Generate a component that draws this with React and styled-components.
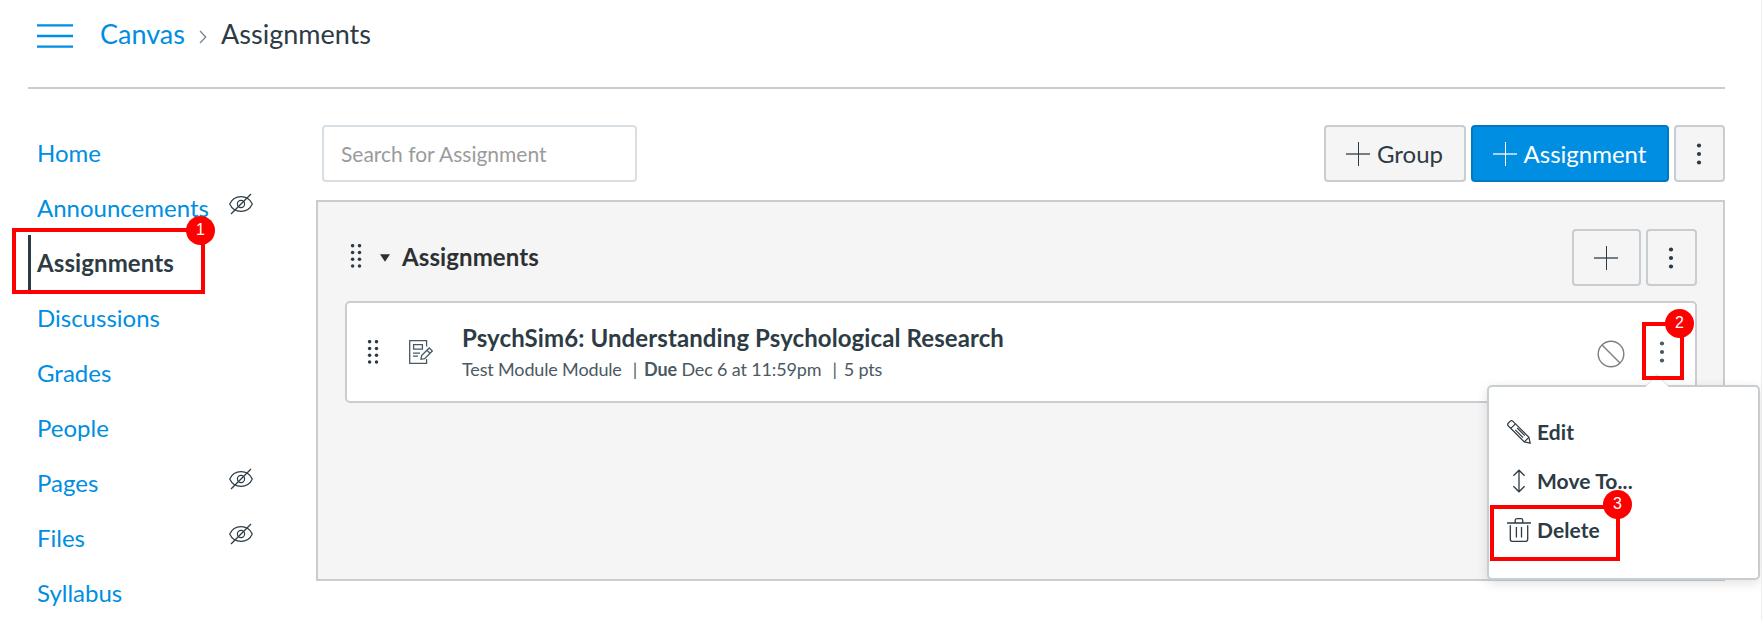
import React from "react";
import styled, { createGlobalStyle } from "styled-components";

const GlobalStyle = createGlobalStyle`
  * {
    box-sizing: border-box;
  }

  body {
    margin: 0;
    background: #fff;
    color: #2d3b45;
    font-family: Lato, "Open Sans", sans-serif;
    font-size: 24px;
    overflow: hidden;
  }
`;

const Page = styled.div`
  position: relative;
  width: 1762px;
  height: 620px;
  padding: 0 36px 0 28px;
  border-right: 1px solid #eeeeef;
  overflow: hidden;
`;

const Header = styled.header`
  display: flex;
  align-items: center;
  height: 89px;
  padding: 0 0 20px 9px;
  border-bottom: 2px solid #c7cdd1;
  font-size: 27px;
`;

const Hamburger = styled.button`
  display: flex;
  width: 36px;
  margin: 5px 27px 0 0;
  padding: 0;
  border: 0;
  background: none;
`;

const Crumb = styled.a`
  color: ${(props) => (props.$current ? "#2d3b45" : "#008ee2")};
  text-decoration: none;
`;

const CrumbArrow = styled.svg`
  margin: 7px 14px 0 14px;
`;

const Main = styled.main`
  display: flex;
  margin-top: 36px;
`;

const Sidebar = styled.nav`
  display: flex;
  flex-direction: column;
  width: 288px;
  flex: none;
`;

const NavItem = styled.a`
  display: flex;
  align-items: center;
  justify-content: space-between;
  height: 55px;
  padding: 0 63px 0 6px;
  border-left: 3px solid ${(props) => (props.$active ? "#2d3b45" : "transparent")};
  color: ${(props) => (props.$active ? "#2d3b45" : "#008ee2")};
  font-weight: ${(props) => (props.$active ? 700 : 400)};
  letter-spacing: ${(props) => (props.$active ? "0.1px" : "normal")};
  text-decoration: none;

  svg {
    flex: none;
    margin-bottom: 7px;
  }
`;

const Content = styled.section`
  flex: 1;
  min-width: 0;
`;

const Toolbar = styled.div`
  display: flex;
  gap: 5px;
  height: 57px;
  padding-left: 6px;
`;

const Search = styled.input`
  width: 315px;
  margin-right: auto;
  padding: 0 17px;
  border: 2px solid #d7dfe5;
  border-radius: 4px;
  font: 400 21px Lato, sans-serif;
  outline: none;

  &::placeholder {
    color: #9b9b9b;
    opacity: 1;
  }
`;

const Button = styled.button`
  display: flex;
  align-items: center;
  justify-content: center;
  gap: 7px;
  width: ${(props) => props.$width}px;
  height: 57px;
  padding: 0 1px 0 0;
  border: 2px solid ${(props) => (props.$primary ? "#0079c1" : "#c7cdd1")};
  border-radius: 4px;
  background: ${(props) => (props.$primary ? "#008ee2" : "#f5f5f5")};
  color: ${(props) => (props.$primary ? "#fff" : "#2d3b45")};
  font: 400 24px Lato, sans-serif;
`;

const Panel = styled.div`
  height: 381px;
  margin-top: 18px;
  padding: 27px 26px 0 27px;
  border: 2px solid #c7cdd1;
  background: #f5f5f5;
`;

const GroupHeader = styled.div`
  display: flex;
  align-items: center;
  gap: 5px;
  padding-left: 5px;

  > svg {
    margin-bottom: 3px;
  }
`;

const GroupTitle = styled.h2`
  display: flex;
  align-items: center;
  gap: 12px;
  margin: 0 auto 3px 13px;
  font-size: 24px;
  font-weight: 700;
  letter-spacing: 0.1px;
  color: #2d3134;

  svg {
    margin-top: 3px;
  }
`;

const Row = styled.div`
  display: flex;
  align-items: center;
  height: 102px;
  margin-top: 15px;
  padding: 0 30px 0 20px;
  border: 2px solid #c7cdd1;
  border-radius: 5px;
  background: #fff;
`;

const RowIcon = styled.div`
  display: flex;
  margin: 0 29px 0 30px;
`;

const RowText = styled.div`
  flex: 1;
`;

const RowTitle = styled.div`
  font-size: 24px;
  line-height: 34px;
  font-weight: 700;
  letter-spacing: 0.1px;
`;

const Details = styled.div`
  display: flex;
  font-size: 18px;
  line-height: 28px;
  letter-spacing: -0.15px;
  color: #4b5963;
  white-space: pre;
`;

const Divider = styled.span`
  margin: 0 7px 0 11px;
`;

const RowActions = styled.div`
  display: flex;
  align-items: center;
  gap: 34px;
`;

const NoIcon = styled.svg`
  margin-top: 3px;
`;

const Menu = styled.div`
  position: absolute;
  left: 1487px;
  top: 385px;
  width: 273px;
  height: 195px;
  padding: 20px 0 0 18px;
  border: 2px solid #c7cdd1;
  border-radius: 5px;
  background: #fff;
  box-shadow: 0 3px 12px rgba(0, 0, 0, 0.12);
`;

const MenuCaret = styled.svg`
  position: absolute;
  left: 155px;
  top: -14px;
`;

const MenuItem = styled.div`
  display: flex;
  align-items: center;
  gap: 6px;
  height: 49px;
  font-size: 21px;
  font-weight: 700;
  letter-spacing: 0.1px;
`;

const Callout = styled.div`
  position: absolute;
  left: ${(props) => props.$x}px;
  top: ${(props) => props.$y}px;
  width: ${(props) => props.$w}px;
  height: ${(props) => props.$h}px;
  border: 4px solid #f00;
`;

const CalloutNumber = styled.span`
  position: absolute;
  right: ${(props) => props.$right}px;
  top: ${(props) => props.$top}px;
  width: 29px;
  height: 29px;
  border-radius: 50%;
  background: #f00;
  color: #fff;
  font: 16px/28px "Liberation Sans", Arial, sans-serif;
  text-align: center;
`;

const HiddenIcon = () => (
  <svg width="24" height="22" viewBox="0 0 24 22" fill="none" stroke="#2d3b45" strokeWidth="1.2">
    <path d="M.7 11C3 6 7 3.6 12 3.6S21 6 23.3 11C21 16 17 18.4 12 18.4S3 16 .7 11Z" />
    <circle cx="12" cy="11" r="3.6" />
    <path d="M2 21 22 1" />
  </svg>
);

const Plus = () => (
  <svg width="24" height="24" viewBox="0 0 24 24" stroke="currentColor" fill="none">
    <path d="M12.5 0V24" />
    <path d="M0 12H24" strokeWidth="1.3" />
  </svg>
);

const Kebab = ({ color = "#2d3b45" }) => (
  <svg width="6" height="24" viewBox="0 0 6 24" fill={color}>
    <circle cx="3" cy="3.5" r="2.1" />
    <circle cx="3" cy="12" r="2.1" />
    <circle cx="3" cy="20.5" r="2.1" />
  </svg>
);

const DragHandle = () => (
  <svg width="12" height="24" viewBox="0 0 12 24" fill="#2d3b45">
    {[1.7, 8.5, 15.3, 22.1].map((y) => (
      <React.Fragment key={y}>
        <circle cx="2.6" cy={y} r="1.75" />
        <circle cx="9.5" cy={y} r="1.75" />
      </React.Fragment>
    ))}
  </svg>
);

const AssignmentIcon = () => (
  <svg width="24" height="24" viewBox="0 0 24 24" fill="none" stroke="#4b5963" strokeWidth="1.3">
    <path d="M17.6 6.5V.7H.7V23.3H17.6V19" />
    <path d="M4.6 4.7H13.4V9.2H4.6Z" />
    <path d="M4 13.1H11M4 16.2H9" />
    <path d="M12 19.3 12.6 15.6 20.2 8 23.3 11 15.7 18.7ZM17.9 10.3 21 13.3" />
  </svg>
);

const PencilIcon = () => (
  <svg width="24" height="24" viewBox="0 0 24 24" fill="none" stroke="#2d3b45" strokeWidth="1.2">
    <path d="M23.2 23.2 17.3 21.9 1.4 6C.4 5 .4 4 1.4 3L3 1.4C4 .4 5 .4 6 1.4L21.9 17.3Z" />
    <path d="M3.8 8.4 8.4 3.8M17.3 21.9 21.9 17.3M8.3 9.9 16 17.6M10.2 8 17.8 15.6" />
  </svg>
);

const MoveIcon = () => (
  <svg width="24" height="24" viewBox="0 0 24 24" fill="none" stroke="#2d3b45" strokeWidth="1.3">
    <path d="M12 1.5V22.5M6.4 6.7 12 1.2 17.6 6.7M6.4 17.3 12 22.8 17.6 17.3" />
  </svg>
);

const TrashIcon = () => (
  <svg width="24" height="24" viewBox="0 0 24 24" fill="none" stroke="#2d3b45" strokeWidth="1.3">
    <path d="M0 5H24M8.2 5V2.5C8.2 1.3 8.9.7 10 .7H14C15.1.7 15.8 1.3 15.8 2.5V5" />
    <path d="M3.3 7.3V21.3C3.3 22.6 4 23.3 5.2 23.3H18.8C20 23.3 20.7 22.6 20.7 21.3V7.3M9.4 9V19.5M14.5 9V19.5" />
  </svg>
);

const links = [
  { label: "Home" },
  { label: "Announcements", hidden: true },
  { label: "Assignments", active: true },
  { label: "Discussions" },
  { label: "Grades" },
  { label: "People" },
  { label: "Pages", hidden: true },
  { label: "Files", hidden: true },
  { label: "Syllabus" },
];

const App = () => {
  return (
    <Page>
      <GlobalStyle />
      <Header>
        <Hamburger aria-label="Menu">
          <svg width="36" height="24" viewBox="0 0 36 24" stroke="#008ee2" strokeWidth="2.3">
            <path d="M0 1.4H36M0 12H36M0 22.6H36" />
          </svg>
        </Hamburger>
        <Crumb>Canvas</Crumb>
        <CrumbArrow width="8" height="14" viewBox="0 0 8 14" fill="none" stroke="#73818c" strokeWidth="1.2">
          <path d="M1 1 6.8 7 1 13" />
        </CrumbArrow>
        <Crumb $current>Assignments</Crumb>
      </Header>

      <Main>
        <Sidebar>
          {links.map((link) => (
            <NavItem key={link.label} $active={link.active}>
              {link.label}
              {link.hidden && <HiddenIcon />}
            </NavItem>
          ))}
        </Sidebar>

        <Content>
          <Toolbar>
            <Search placeholder="Search for Assignment" />
            <Button $width={142}>
              <Plus />
              Group
            </Button>
            <Button $width={198} $primary>
              <Plus />
              Assignment
            </Button>
            <Button $width={51}>
              <Kebab />
            </Button>
          </Toolbar>

          <Panel>
            <GroupHeader>
              <DragHandle />
              <GroupTitle>
                <svg width="10" height="8" viewBox="0 0 10 8" fill="#2d3134">
                  <path d="M0 .3H10L5 7.7Z" />
                </svg>
                Assignments
              </GroupTitle>
              <Button $width={69}>
                <Plus />
              </Button>
              <Button $width={51}>
                <Kebab />
              </Button>
            </GroupHeader>

            <Row>
              <DragHandle />
              <RowIcon>
                <AssignmentIcon />
              </RowIcon>
              <RowText>
                <RowTitle>PsychSim6: Understanding Psychological Research</RowTitle>
                <Details>
                  Test Module Module
                  <Divider>|</Divider>
                  <b>Due</b> Dec 6 at 11:59pm
                  <Divider>|</Divider>5 pts
                </Details>
              </RowText>
              <RowActions>
                <NoIcon width="28" height="28" viewBox="0 0 28 28" fill="none" stroke="#7f7f7f" strokeWidth="1.4">
                  <circle cx="14" cy="14" r="12.8" />
                  <path d="M5 5 23 23" />
                </NoIcon>
                <Kebab color="#4b5963" />
              </RowActions>
            </Row>
          </Panel>
        </Content>
      </Main>

      <Menu>
        <MenuCaret width="26" height="15" viewBox="0 0 26 15">
          <path d="M1 14 13 1.5 25 14V15H1Z" fill="#fff" />
          <path d="M1 14 13 1.5 25 14" fill="none" stroke="#d5d9dc" />
        </MenuCaret>
        <MenuItem>
          <PencilIcon />
          Edit
        </MenuItem>
        <MenuItem>
          <MoveIcon />
          Move To...
        </MenuItem>
        <MenuItem>
          <TrashIcon />
          Delete
        </MenuItem>
      </Menu>

      <Callout $x={12} $y={228} $w={193} $h={66}>
        <CalloutNumber $right={-14} $top={-16}>1</CalloutNumber>
      </Callout>
      <Callout $x={1642} $y={322} $w={42} $h={58}>
        <CalloutNumber $right={-14} $top={-17}>2</CalloutNumber>
      </Callout>
      <Callout $x={1490} $y={505} $w={130} $h={56}>
        <CalloutNumber $right={-16} $top={-19}>3</CalloutNumber>
      </Callout>
    </Page>
  );
};

export default App;
